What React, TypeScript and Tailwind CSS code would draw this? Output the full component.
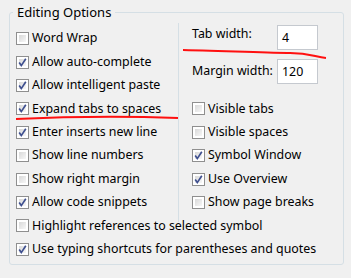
import React from 'react';

const Box = ({ checked }: { checked?: boolean }) => (
  <span className="relative flex h-[13px] w-[13px] shrink-0 items-center justify-center border border-[#8f8f8f] bg-white">
    <span className="absolute inset-[2px] bg-gradient-to-br from-[#d9d9d9] to-[#f7f7f7]" />
    {checked && (
      <svg viewBox="0 0 11 11" className="relative h-[11px] w-[11px]">
        <path d="M2.2 5.6 L4.3 8.6 L8.8 1.8" fill="none" stroke="#3e4f8f" strokeWidth="1.7" />
      </svg>
    )}
  </span>
);

const Option = ({ label, checked }: { label: string; checked?: boolean }) => (
  <div className="flex h-[23.4px] items-center gap-[3px]">
    <Box checked={checked} />
    <span className="whitespace-nowrap">{label}</span>
  </div>
);

export default function App() {
  return (
    <div
      className="relative h-[278px] w-[351px] overflow-hidden bg-[#f0f0f0] pl-[9px] pt-[3px] text-[12.4px] leading-none text-[#000]"
      style={{ fontFamily: '"Noto Sans", sans-serif' }}
    >
      <fieldset className="h-[262px] w-[335px] rounded-[3px] border border-[#d5dfe5] pl-[6px]">
        <legend className="ml-[-3px] px-[4px] text-[13px] leading-[18px]">Editing Options</legend>
        <div className="flex">
          <div className="w-[162px] pt-[6px]">
            <Option label="Word Wrap" />
            <Option label="Allow auto-complete" checked />
            <Option label="Allow intelligent paste" checked />
            <Option label="Expand tabs to spaces" checked />
            <Option label="Enter inserts new line" checked />
            <Option label="Show line numbers" />
            <Option label="Show right margin" />
            <Option label="Allow code snippets" checked />
          </div>
          <div className="mt-[2px] mb-[-8px] w-px bg-[#d5dfe5]" />
          <div className="pl-[13px] pt-[3px]">
            <div className="flex h-[70.2px] flex-col gap-[9px] pt-[1px]">
              <div className="flex items-start">
                <span className="w-[85px] whitespace-nowrap pt-[3px]">Tab width:</span>
                <span className="flex h-[25px] w-[41px] items-center border border-[#c5c9cf] bg-white px-[4px] pt-[2px]">4</span>
              </div>
              <div className="flex items-center">
                <span className="w-[85px] whitespace-nowrap">Margin width:</span>
                <span className="flex h-[25px] w-[41px] items-center border border-[#c5c9cf] bg-white px-[4px] pt-[2px]">120</span>
              </div>
            </div>
            <div className="pt-[3px]">
              <Option label="Visible tabs" />
              <Option label="Visible spaces" />
              <Option label="Symbol Window" checked />
              <Option label="Use Overview" checked />
              <Option label="Show page breaks" />
            </div>
          </div>
        </div>
        <Option label="Highlight references to selected symbol" />
        <Option label="Use typing shortcuts for parentheses and quotes" checked />
      </fieldset>
      <svg className="pointer-events-none absolute inset-0" width="351" height="278">
        <path d="M183 50 C 230 51, 270 53, 290 53 S 315 57, 326 58" fill="none" stroke="#ff1010" strokeWidth="2" />
        <path d="M16 119 C 60 117, 120 116, 178 118" fill="none" stroke="#ff1010" strokeWidth="2" />
      </svg>
    </div>
  );
}
